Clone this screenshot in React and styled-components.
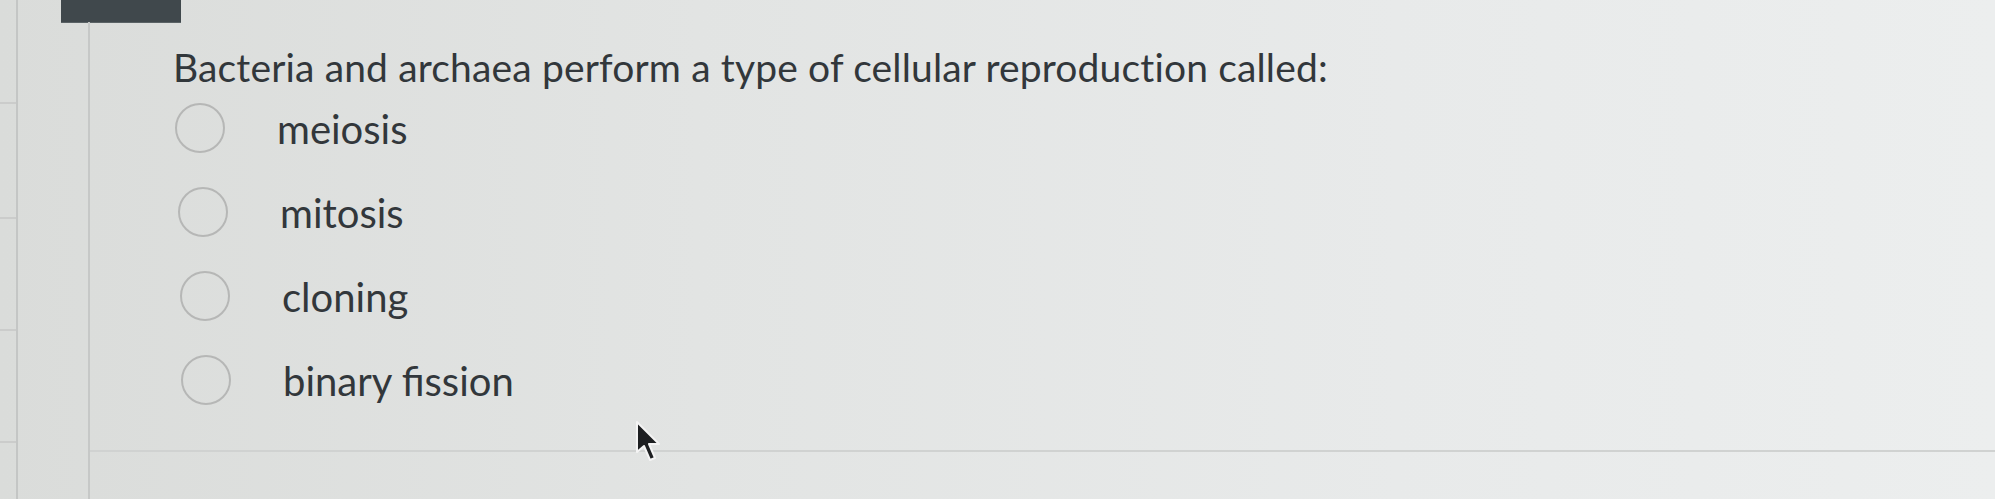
import styled, { createGlobalStyle } from "styled-components";

const GlobalStyle = createGlobalStyle`
  html, body {
    margin: 0;
    padding: 0;
  }
  body {
    font-family: Lato, "Open Sans", sans-serif;
    background: #e3e5e4;
  }
`;

const Page = styled.div`
  position: relative;
  display: flex;
  width: 1995px;
  height: 499px;
  overflow: hidden;
  background: linear-gradient(90deg, #dadcda 0%, #e2e4e3 35%, #e8eaea 70%, #eceeee 100%);
`;

const Rail = styled.div`
  display: flex;
  flex-direction: column;
  width: 16px;
  border-right: 2px solid #c4c6c5;
`;

const RailCell = styled.div`
  height: ${(p) => p.h}px;
  border-bottom: 2px solid #cbcccb;
`;

const Body = styled.div`
  flex: 1;
  display: flex;
  flex-direction: column;
`;

const TopBar = styled.div`
  height: 22px;
  display: flex;
`;

const DarkTab = styled.div`
  margin-left: 43px;
  width: 120px;
  height: 22px;
  background: #40484c;
  border-bottom: 1px solid #5a6265;
`;

const Columns = styled.div`
  flex: 1;
  display: flex;
`;

const Gutter = styled.div`
  width: 70px;
`;

const Main = styled.div`
  flex: 1;
  border-left: 2px solid #c6c8c7;
`;

const Question = styled.div`
  height: 430px;
  box-sizing: border-box;
  padding: 22px 0 0 83px;
  border-bottom: 2px solid #d0d2d1;
`;

const Prompt = styled.div`
  font-size: 39px;
  line-height: 47px;
  color: #32373b;
  letter-spacing: 0.15px;
`;

const Options = styled.div`
  display: flex;
  flex-direction: column;
  gap: 34px;
  margin-top: 12px;
`;

const Option = styled.label`
  display: flex;
  align-items: center;
  height: 50px;
  gap: 52px;
  padding-left: ${(p) => p.shift}px;
`;

const Radio = styled.span`
  width: 46px;
  height: 46px;
  flex: none;
  border-radius: 50%;
  border: 2px solid #b6b7b6;
`;

const OptionText = styled.span`
  font-size: 40px;
  line-height: 47px;
  color: #32373b;
  padding-top: 2px;
`;

const Cursor = styled.svg`
  position: absolute;
  left: 634px;
  top: 420px;
`;

const options = [
  { text: "meiosis", shift: 2 },
  { text: "mitosis", shift: 5 },
  { text: "cloning", shift: 7 },
  { text: "binary fission", shift: 8 },
];

export default function App() {
  return (
    <>
      <GlobalStyle />
      <Page>
        <Rail>
          <RailCell h={102} />
          <RailCell h={113} />
          <RailCell h={110} />
          <RailCell h={110} />
        </Rail>
        <Body>
          <TopBar>
            <DarkTab />
          </TopBar>
          <Columns>
            <Gutter />
            <Main>
              <Question>
                <Prompt>Bacteria and archaea perform a type of cellular reproduction called:</Prompt>
                <Options>
                  {options.map((o) => (
                    <Option key={o.text} shift={o.shift}>
                      <Radio />
                      <OptionText>{o.text}</OptionText>
                    </Option>
                  ))}
                </Options>
              </Question>
            </Main>
          </Columns>
        </Body>
        <Cursor width="30" height="44" viewBox="0 0 30 44">
          <path
            d="M3 2 L3 32 L10 26 L16 40 L21 38 L15 24 L25 24 Z"
            fill="#1d1f21"
            stroke="#f4f4f4"
            strokeWidth="2"
            strokeLinejoin="round"
          />
        </Cursor>
      </Page>
    </>
  );
}
